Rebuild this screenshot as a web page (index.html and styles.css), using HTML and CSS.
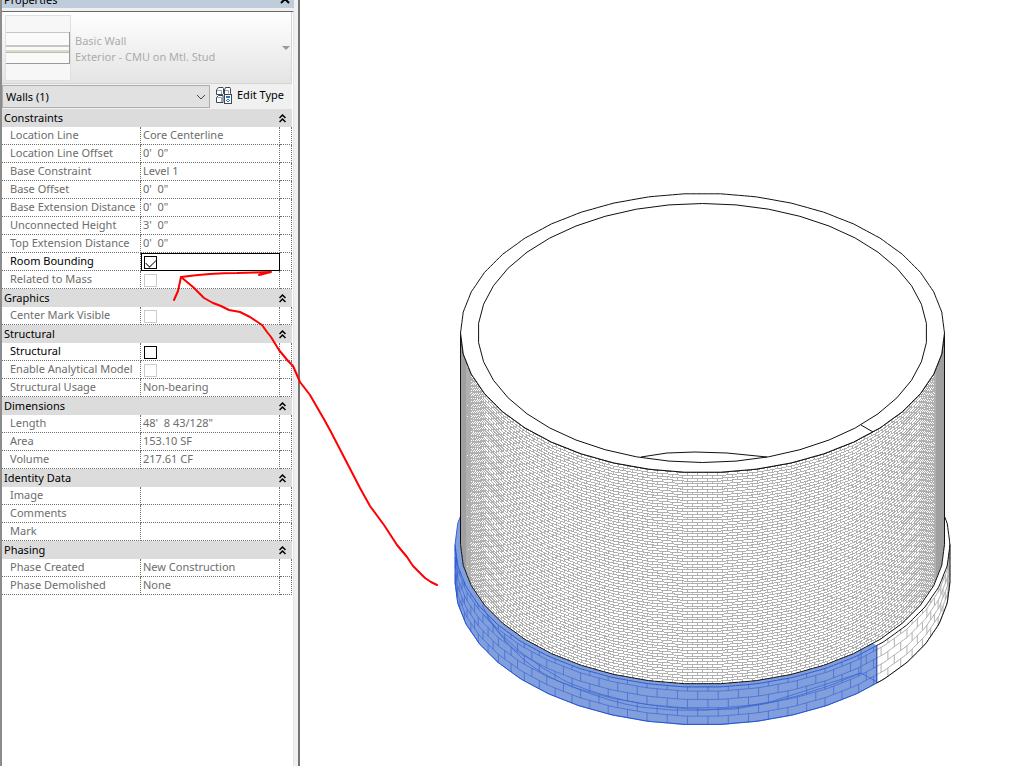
FILE: index.html
```html
<!DOCTYPE html>
<html lang="en">
<head>
<meta charset="utf-8">
<title>Properties</title>
<link rel="stylesheet" href="styles.css">
</head>
<body>
<div class="workspace">
  <aside class="palette">
    <header class="titlebar"><span>Properties</span>
      <button class="close" aria-label="Close"><svg width="10" height="10" viewBox="0 0 10 10"><path d="M1 1l8 8M9 1l-8 8"/></svg></button>
    </header>
    <div class="palette-body">
      <button class="type-selector">
        <svg class="thumb" width="66" height="66" viewBox="0 0 66 66">
          <rect x=".5" y=".5" width="65" height="65" fill="#f7f7f7" stroke="#e0e0e0"/>
          <path fill="#fafafa" d="M1 17h64v31H1z"/>
          <path fill="#c6c6c6" d="M1 17h64v1H1zM1 30h64v2H1z"/>
          <path fill="#dedcc8" d="M1 35h64v2H1z"/><path fill="#bcbcb4" d="M1 37h64v1H1z"/>
          <path fill="#999" d="M1 48h64v1H1zM64 17h1v32h-1z"/>
        </svg>
        <span class="type-name">Basic Wall<br>Exterior - CMU on Mtl. Stud</span>
        <span class="type-arrow"></span>
      </button>
      <div class="filter-row">
        <div class="filter">
          <select aria-label="Element filter"><option>Walls (1)</option></select>
          <svg class="chevron" width="10" height="6" viewBox="0 0 10 6"><path d="M1 1l4 4 4-4"/></svg>
        </div>
        <button class="edit-type">
          <svg width="17" height="17" viewBox="0 0 17 17" fill="none" stroke="#3c4658">
            <path fill="#fff" d="M.5 3l2-2.500h4.500l.5 1v5l-1 1H.5zM8.500 3l1-2.500h4.500l.5 1v5l-1 1h-5zM.5 10.500l2-2h4.500v7H.5z"/>
            <path stroke="#9aa3b0" d="M1 3.500h4.500v3.500M9 3.500h3.500v3M1 10.500h4.500v4.500"/>
            <rect x="8.500" y="7.500" width="7" height="9" fill="#fff"/>
            <path fill="#2e75b5" stroke="none" d="M10 9h4v2h-4z"/>
            <path stroke="#2e75b5" d="M10 13.500h1M13 13.500h1M11 12.500h2M11 14.500h2"/>
          </svg>
          <span>Edit Type</span>
        </button>
      </div>
      <table class="props" id="props" aria-label="Instance properties">
        <colgroup><col class="c-label"><col><col class="c-more"></colgroup>
      </table>
    </div>
  </aside>
  <main class="view">
    <svg id="model" class="model" viewBox="300 0 710 766" preserveAspectRatio="xMinYMin meet" role="img" aria-label="Circular wall, 3D view"></svg>
  </main>
  <svg class="markup" width="450" height="600" viewBox="0 0 450 600" aria-hidden="true">
    <path d="M174 300l4-9 3-14q30-4 56-4l34-1-12 3"/>
    <path d="M181 277L193 287 204 298 213 303 221 306 229 310 240 312 250 317 262 325 267 332 271 337 279 350 288 361 293 366 300 382 310 395 325 421 331 432 345 459 360 488 370 506 384 525 397 545 407 557 413 566 425 578 431 582 437 585"/>
  </svg>
</div>
<script src="app.js"></script>
</body>
</html>
```
FILE: styles.css
```css
* { box-sizing: border-box; }
body { margin: 0; background: #fff; color: #000; font: 11px/16px "Noto Sans", "Open Sans", sans-serif; }
button { margin: 0; padding: 0; border: 0; background: none; font: inherit; color: inherit; }
svg { display: block; flex: none; }
.workspace { position: relative; display: flex; min-height: 100vh; overflow: hidden; }
.palette { flex: none; width: 300px; background: #f0f0f0; border-left: 2px solid #8c8c8c; border-right: 2px solid #747474; }
.titlebar { display: flex; align-items: flex-end; justify-content: space-between; height: 8px; width: 292px; padding: 0 4px 0 2px; background: #bfcddb; overflow: hidden; }
.close { margin-bottom: 4px; }
.close svg { fill: none; stroke: #000; stroke-width: 2; }
.palette-body { width: 292px; min-height: calc(100vh - 11px); margin-top: 3px; padding-right: 1px; background: #fff; border-top: 1px solid #696969; border-right: 1px solid #e3e3e3; }
.type-selector { display: flex; align-items: center; width: 100%; height: 72px; padding: 0 1px 0 3px; text-align: left; color: #acacac; background: linear-gradient(#fff, #e4e4e4); border-bottom: 1px solid #d4d4d4; border-right: 1px solid #d4d4d4; }
.type-name { flex: 1; padding-left: 4px; padding-top: 2px; }
.type-arrow { border: 4px solid transparent; border-top-color: #999; border-bottom: 0; }
.filter-row { display: flex; height: 25px; background: #f0f0f0; padding-top: 1px; }
.filter { position: relative; width: 208px; }
.filter select { appearance: none; width: 100%; height: 23px; padding: 0 3px; border: 1px solid #adadad; border-radius: 0; background: #e1e1e1; font: inherit; color: #000; }
.chevron { position: absolute; right: 4px; top: 9px; fill: none; stroke: #444; }
.edit-type { display: flex; align-items: center; gap: 4px; height: 20px; padding-left: 6px; }
.props { width: 290px; table-layout: fixed; border-spacing: 0; }
.c-label { width: 139px; }
.c-more { width: 12px; }
.props th, .props td { height: 18px; padding: 0 2px 1px; border-right: 1px dotted #707070; border-bottom: 1px dotted #707070; line-height: 16px; font-weight: 400; text-align: left; white-space: pre; color: #6d6d6d; }
.props th.label { padding-left: 8px; padding-right: 0; }
.props .on th { color: #000; }
.props .section th { padding: 0 6px 0 2px; background: #dcdcdc; color: #000; border: 0; }
.section-head { display: flex; align-items: center; justify-content: space-between; height: 18px; }
.section-head path { fill: none; stroke: #000; stroke-width: 1.500; }
.props td.focus { border: 0; outline: 1px solid #000; outline-offset: -1px; }
.check { appearance: none; display: block; width: 13px; height: 13px; margin: 2px 0 0 1px; border: 1px solid #000; background: #fff; }
.check:disabled { border-color: #ccc; }
.check:checked::after { content: ""; display: block; width: 9px; height: 5px; margin: 2px 0 0 1px; border: solid #333; border-width: 0 0 1px 1px; transform: rotate(-45deg); }
.view { flex: 1; min-width: 0; }
.model { width: 100%; }
.markup { position: absolute; left: 0; top: 0; pointer-events: none; fill: none; stroke: #f00; stroke-width: 2; stroke-linejoin: round; stroke-linecap: round; }
```
FILE: app.js
```js
// Instance property grid
const groups = [
  ["Constraints", [["Location Line", "Core Centerline"], ["Location Line Offset", "0'  0\""], ["Base Constraint", "Level 1"], ["Base Offset", "0'  0\""], ["Base Extension Distance", "0'  0\""], ["Unconnected Height", "3'  0\""], ["Top Extension Distance", "0'  0\""], ["Room Bounding", { on: true, checked: true }], ["Related to Mass", {}]]],
  ["Graphics", [["Center Mark Visible", {}]]],
  ["Structural", [["Structural", { on: true }], ["Enable Analytical Model", {}], ["Structural Usage", "Non-bearing"]]],
  ["Dimensions", [["Length", "48'  8 43/128\""], ["Area", "153.10 SF"], ["Volume", "217.61 CF"]]],
  ["Identity Data", [["Image", ""], ["Comments", ""], ["Mark", ""]]],
  ["Phasing", [["Phase Created", "New Construction"], ["Phase Demolished", "None"]]]
];
let rows = "", id = 0;
for (const [name, items] of groups) {
  rows += `<tr class="section"><th colspan="3"><div class="section-head">${name}<button aria-label="Collapse ${name}"><svg width="7" height="9" viewBox="0 0 7 9"><path d="M.5 4l3-3 3 3M.5 8l3-3 3 3"/></svg></button></div></th></tr>`;
  for (const [label, value] of items) {
    const isCheck = typeof value === "object", key = "p" + id++;
    const cell = isCheck ? `<input class="check" type="checkbox" id="${key}" ${value.checked ? "checked" : ""} ${value.on ? "" : "disabled"}>` : value;
    rows += `<tr class="${value.on ? "on" : ""}"><th class="label" scope="row">${isCheck ? `<label for="${key}">${label}</label>` : label}</th><td class="${value.checked ? "focus" : ""}">${cell}</td><td></td></tr>`;
  }
}
document.getElementById("props").insertAdjacentHTML("beforeend", "<tbody>" + rows + "</tbody>");

// Isometric model: circles become ellipses split into 42 facets
const CX = 702.5, STEP = Math.PI * 2 / 42;
const vertex = (k, rx, cy) => [CX + rx * Math.cos(k * STEP), cy + rx * 0.577 * Math.sin(k * STEP)];
function point(a, rx, cy) {
  const k = Math.floor(a / STEP), t = a / STEP - k;
  const p = vertex(k, rx, cy), q = vertex(k + 1, rx, cy);
  return [p[0] + (q[0] - p[0]) * t, p[1] + (q[1] - p[1]) * t];
}
const fmt = p => p[0].toFixed(1) + " " + p[1].toFixed(1);
function arc(a, b, rx, cy) {
  const pts = [point(a, rx, cy)], dir = b > a ? 1 : -1;
  for (let i = 1; i * STEP / 6 < Math.abs(b - a); i++) pts.push(point(a + dir * i * STEP / 6, rx, cy));
  pts.push(point(b, rx, cy));
  return pts.map(fmt).join("L");
}
function masonry(a0, a1, rx, topY, bottomY, course, count, phase) {
  let d = "", row = 0;
  const unit = Math.PI * 2 / count;
  for (let y = bottomY; y > topY; y -= course, row++) {
    d += "M" + arc(a0, a1, rx, y);
    const y2 = Math.max(topY, y - course);
    for (let a = phase + (row % 2) * unit / 2 - unit * count; a < a1; a += unit) {
      if (a > a0) d += "M" + fmt(point(a, rx, y)) + "L" + fmt(point(a, rx, y2));
    }
  }
  return d;
}
const PI = Math.PI, R = 242, B = 247.500, SEAM = 0.788, BASE = 544.500, FOOT = 582;
const path = (d, attrs) => `<path d="${d}" ${attrs}/>`;
const ink = 'fill="none" stroke="#111"';
let g = "";
// Base wall, right part
g += path("M" + arc(-0.220, SEAM, B, BASE) + "L" + arc(SEAM, 0, B, FOOT) + "L" + fmt(point(0, B, BASE)), 'fill="#fff" stroke="none"');
g += path(masonry(0, SEAM, B, BASE, FOOT, 8.330, 76, PI / 2 - 0.022), 'fill="none" stroke="#b0b0b0"');
g += path("M" + arc(-0.220, SEAM, B, BASE) + "L" + arc(SEAM, 0, B, FOOT) + "L" + fmt(point(0, B, BASE)), ink);
// Base wall, selected part
const sel = "M" + arc(SEAM, PI + 0.210, B, BASE) + "L" + fmt([460, 545]) + "L" + arc(PI, SEAM, R, BASE) + "Z";
const face = "M" + arc(SEAM, PI, B, BASE) + "L" + arc(PI, SEAM, B, FOOT) + "Z";
g += path(sel, 'fill="#829fdd"') + path(face, 'fill="#829fdd"');
g += path(masonry(SEAM, PI, B, BASE, FOOT, 8.330, 76, PI / 2 - 0.022), 'fill="none" stroke="#3a66d2" stroke-opacity=".7"');
g += path(face + "M" + arc(PI, PI + 0.210, B, BASE), 'fill="none" stroke="#194bd0" stroke-opacity=".85"');
g += path("M482 605Q493 631 523 659Q544 677 573 687Q610 702 640 707Q705 716 770 702L861 673L877 682M484 615Q515 655 567 682Q640 713 735 709Q800 700 861 673V650", 'fill="none" stroke="#3463cc" stroke-opacity=".7"');
// Main wall face
const wall = "M" + arc(0, PI, R, 333) + "L" + arc(PI, 0, R, BASE) + "Z";
g += path(wall, 'fill="#fff"');
g += `<clipPath id="wall"><path d="${wall}"/></clipPath><g clip-path="url(#wall)">`;
g += path(masonry(0, PI, R, 333, BASE, 2.777, 150, PI / 2), 'fill="none" stroke="#b0b0b0" shape-rendering="crispEdges"');
g += '<path fill="#a0a0a0" d="M460 320h6v270h-6zM936 320h9v270h-9z"/></g>';
g += path(wall, ink);
// Top rim
g += path("M" + arc(0, PI * 2, R, 333) + "Z", 'fill="#fff" stroke="#111"');
const inner = Array.from({ length: 42 }, (_, k) => fmt(vertex(k + 0.5, 224.500, 333)));
g += path("M" + inner.join("L") + "Z", ink);
g += path("M861 425L873 432M641 457L667 453L695 452L727 453L767 457", ink);
document.getElementById("model").innerHTML = g;
```
